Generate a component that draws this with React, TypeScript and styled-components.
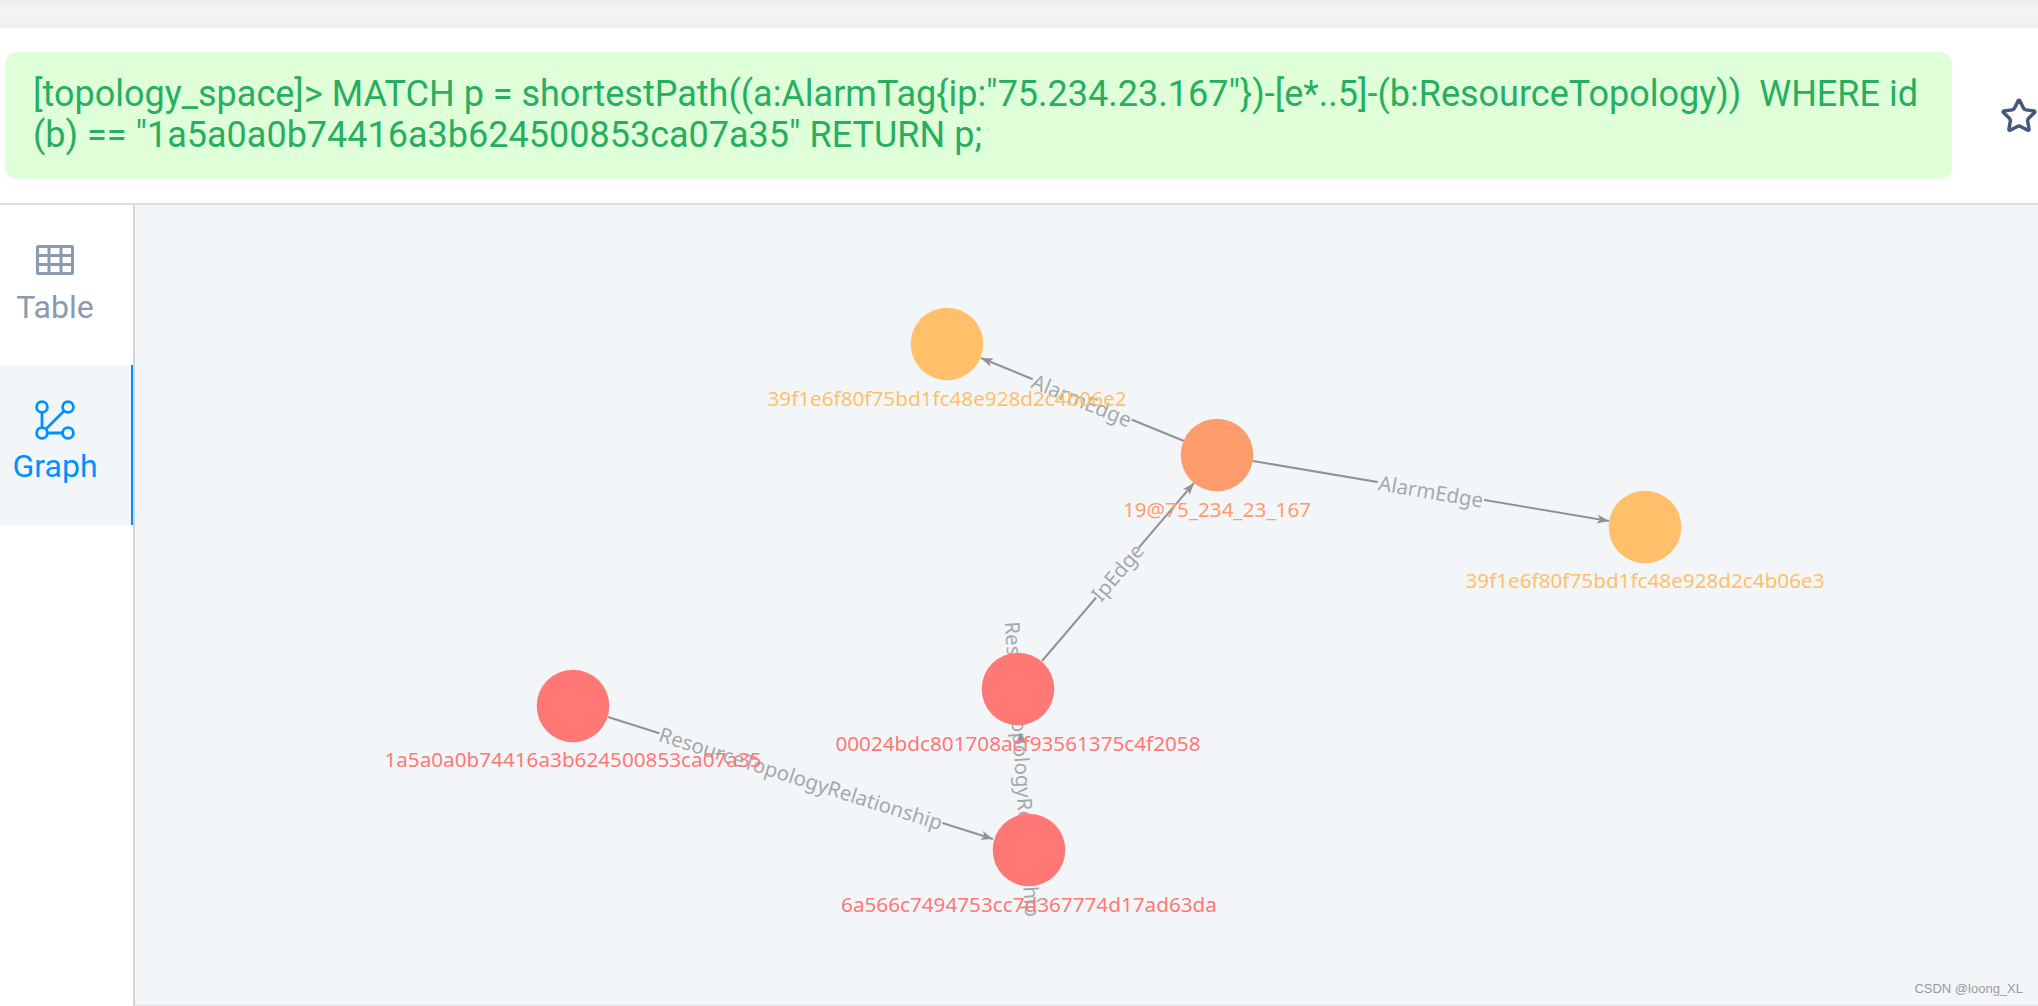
import React from 'react';
import styled, { createGlobalStyle } from 'styled-components';
import { Star } from 'lucide-react';

const GlobalStyle = createGlobalStyle`
  html, body {
    margin: 0;
    padding: 0;
    height: 100%;
    background: #fff;
    overflow: hidden;
  }
  #root {
    height: 100%;
  }
`;

const Page = styled.div`
  display: flex;
  flex-direction: column;
  height: 1006px;
  font-family: Roboto, 'Noto Sans', sans-serif;
`;

const BrowserStrip = styled.div`
  flex: none;
  height: 28px;
  background: linear-gradient(#ebebeb, #f5f5f5 40%, #f2f2f2 85%, #ececec);
`;

const Header = styled.header`
  flex: none;
  display: flex;
  align-items: center;
  height: 177px;
  padding-left: 5px;
  box-sizing: border-box;
  border-bottom: 2px solid #dedede;
`;

const Query = styled.div`
  flex: none;
  box-sizing: border-box;
  width: 1947px;
  height: 127px;
  padding: 22px 28px;
  border-radius: 12px;
  background: #dfffd9;
  color: #27ae60;
  font-size: 36px;
  line-height: 41px;
  white-space: pre-wrap;
`;

const StarButton = styled.button`
  flex: none;
  display: flex;
  margin-left: 48px;
  padding: 0;
  border: none;
  background: none;
  color: #44597d;
`;

const Body = styled.div`
  flex: 1;
  display: flex;
  min-height: 0;
`;

const Sidebar = styled.nav`
  flex: none;
  width: 133px;
  box-sizing: content-box;
  border-right: 2px solid #d6d6d6;
`;

const Tab = styled.div<{ $active?: boolean }>`
  display: flex;
  flex-direction: column;
  align-items: center;
  box-sizing: border-box;
  height: 160px;
  padding: ${({ $active }) => ($active ? '35px' : '40px')} 21px 0 0;
  gap: ${({ $active }) => ($active ? '5px' : '11px')};
  background: ${({ $active }) => ($active ? '#f3f6f9' : 'transparent')};
  border-right: 2px solid ${({ $active }) => ($active ? '#0091ff' : 'transparent')};
  color: ${({ $active }) => ($active ? '#0091ff' : '#8b9ab1')};
  font-size: 32px;
  line-height: 42px;
`;

const Canvas = styled.main`
  position: relative;
  flex: 1;
  min-width: 0;
  background: #f3f6f9;
  border-bottom: 1px solid #e2e2e2;
`;

const GraphSvg = styled.svg`
  display: block;
  width: 100%;
  height: 100%;
`;

const NodeLabel = styled.text<{ $color: string }>`
  font-family: 'Noto Sans', sans-serif;
  font-size: 20.7px;
  text-anchor: middle;
  fill: ${({ $color }) => $color};
`;

const EdgeLabel = styled.text`
  font-family: 'Noto Sans', sans-serif;
  font-size: 20.5px;
  text-anchor: middle;
  dominant-baseline: central;
  fill: #a6a8ab;
`;

const Watermark = styled.span`
  position: absolute;
  right: 15px;
  bottom: 9px;
  font-family: 'Liberation Sans', sans-serif;
  font-size: 13px;
  color: #9a9a9a;
`;

const YELLOW = '#ffc069';
const ORANGE = '#ff9c6e';
const RED = '#ff7875';

const nodes = [
  { x: 947, y: 344, color: YELLOW, text: '39f1e6f80f75bd1fc48e928d2c4b06e2', base: 406 },
  { x: 1217, y: 455, color: ORANGE, text: '19@75_234_23_167', base: 517 },
  { x: 1645, y: 527, color: YELLOW, text: '39f1e6f80f75bd1fc48e928d2c4b06e3', base: 588 },
  { x: 573, y: 706, color: RED, text: '1a5a0a0b74416a3b624500853ca07a35', base: 767 },
  { x: 1018, y: 689, color: RED, text: '00024bdc801708acf93561375c4f2058', base: 751 },
  { x: 1029, y: 850, color: RED, text: '6a566c7494753cc7d367774d17ad63da', base: 912 },
];

// edge line, then where the label sits along it
const edges = [
  { x1: 1184, y1: 441, x2: 981, y2: 358, text: 'AlarmEdge', lx: 1082, ly: 400, angle: 22.4, w: 107 },
  { x1: 1253, y1: 461, x2: 1609, y2: 521, text: 'AlarmEdge', lx: 1431, ly: 491, angle: 9.6, w: 108 },
  { x1: 1042, y1: 661, x2: 1194, y2: 483, text: 'IpEdge', lx: 1117, ly: 572, angle: -49.5, w: 66 },
  { x1: 608, y1: 717, x2: 993, y2: 839, text: 'ResourceTopologyRelationship', lx: 801, ly: 778, angle: 17.6, w: 297 },
  { x1: 1029, y1: 850, x2: 1020, y2: 732, text: 'ResourceTopologyRelationship', lx: 1023, ly: 769, angle: 86, w: 293 },
];

const TableIcon = () => (
  <svg width="38" height="30" viewBox="0 0 38 30" fill="none" stroke="currentColor" strokeWidth="3">
    <rect x="1.5" y="1.5" width="35" height="27" rx="1" />
    <path d="M13 1.5v27M25 1.5v27M1.5 10.5h35M1.5 19.5h35" />
  </svg>
);

const GraphIcon = () => (
  <svg width="40" height="40" viewBox="0 0 40 40" fill="none" stroke="currentColor" strokeWidth="2.8">
    <circle cx="7" cy="7" r="5.4" />
    <circle cx="33" cy="7" r="5.4" />
    <circle cx="7" cy="33" r="5.4" />
    <circle cx="33" cy="33" r="5.4" />
    <path d="M7 12.4v15.2M11 29 29 11M12.4 33h15.2" />
  </svg>
);

function Arrow({ x1, y1, x2, y2 }: { x1: number; y1: number; x2: number; y2: number }) {
  const a = (Math.atan2(y2 - y1, x2 - x1) * 180) / Math.PI;
  return (
    <path
      d="M0 0 L-12 -4.5 L-9 0 L-12 4.5 Z"
      fill="#929292"
      transform={`translate(${x2} ${y2}) rotate(${a})`}
    />
  );
}

export default function App() {
  return (
    <Page>
      <GlobalStyle />
      <BrowserStrip />
      <Header>
        <Query>
          {'[topology_space]> MATCH p = shortestPath((a:AlarmTag{ip:"75.234.23.167"})-[e*..5]-(b:ResourceTopology))  WHERE id'}
          <br />
          {'(b) == "1a5a0a0b74416a3b624500853ca07a35" RETURN p;'}
        </Query>
        <StarButton aria-label="favorite">
          <Star size={38} strokeWidth={2.2} />
        </StarButton>
      </Header>
      <Body>
        <Sidebar>
          <Tab>
            <TableIcon />
            Table
          </Tab>
          <Tab $active>
            <GraphIcon />
            Graph
          </Tab>
        </Sidebar>
        <Canvas>
          <GraphSvg viewBox="135 205 1903 800">
            {edges.map((e, i) => (
              <g key={i}>
                <line x1={e.x1} y1={e.y1} x2={e.x2} y2={e.y2} stroke="#929292" strokeWidth="2" />
              </g>
            ))}
            {edges.map((e, i) => (
              <g key={i} transform={`translate(${e.lx} ${e.ly}) rotate(${e.angle})`}>
                <rect x={-e.w / 2} y={-13} width={e.w} height={26} fill="#f3f6f9" />
              </g>
            ))}
            {edges.map((e, i) => (
              <EdgeLabel key={i} transform={`translate(${e.lx} ${e.ly}) rotate(${e.angle})`}>
                {e.text}
              </EdgeLabel>
            ))}
            {edges.map((e, i) => (
              <Arrow key={i} x1={e.x1} y1={e.y1} x2={e.x2} y2={e.y2} />
            ))}
            {nodes.map((n) => (
              <circle key={n.text} cx={n.x} cy={n.y} r={36.3} fill={n.color} />
            ))}
            {nodes.map((n) => (
              <NodeLabel key={n.text} x={n.x} y={n.base} $color={n.color}>
                {n.text}
              </NodeLabel>
            ))}
          </GraphSvg>
          <Watermark>CSDN @loong_XL</Watermark>
        </Canvas>
      </Body>
    </Page>
  );
}
